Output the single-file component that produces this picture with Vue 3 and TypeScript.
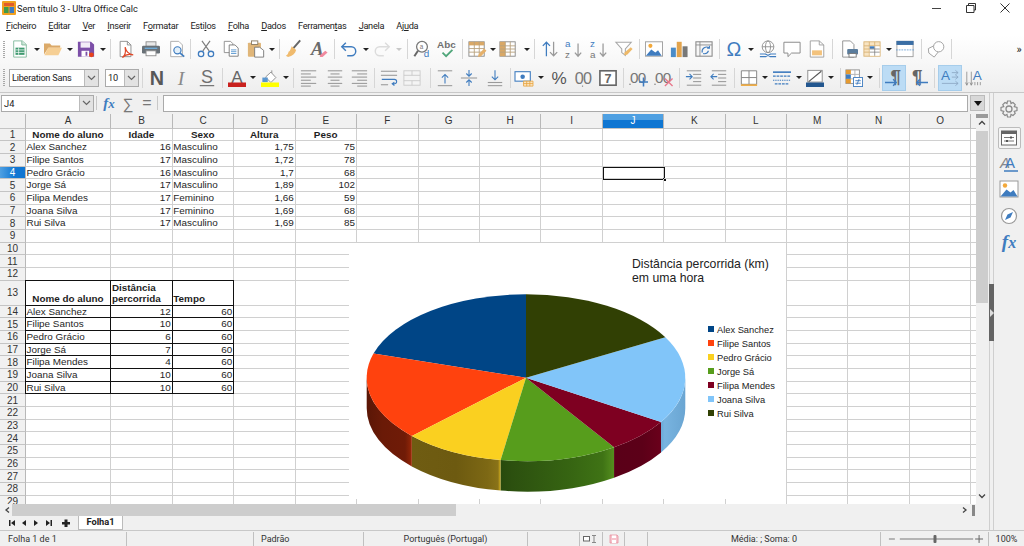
<script setup lang="ts">
const B = '#3f7cbf'
const S = `font-family="Liberation Sans"`
const lines = (ys: number[], x1: number[], x2: number[], c = '#8c8c8c') =>
  ys.map((y, i) => `<path d="M${x1[i]} ${y}H${x2[i]}" stroke="${c}" stroke-width="1.2" fill="none"/>`).join('')

const icons: Record<string, string> = {
  new: `<path d="M3 1h9.500L17 5v14H3z" fill="#fff" stroke="#7fb89a"/><path d="M12 1v4.500h5" fill="#cde6d8" stroke="#7fb89a"/><path d="M5 8.500h10v8H5z" fill="#3f9a70"/><path d="M5 11h10M5 13.800h10M8.500 8.500v8" stroke="#fff" stroke-width=".8"/>`,
  open: `<path d="M0 16V4h6.500l2 2H18v2.500H5L0 16z" fill="#dba968"/><path d="M.5 17 4.500 8.500h15.500L16 17z" fill="#f6cf94"/>`,
  save: `<path d="M1 2h14.500L19 5v13.500H1z" fill="#7c4fa8"/><rect x="4" y="2.500" width="10.500" height="6" fill="#f2ecf7"/><rect x="5" y="12" width="8.500" height="6.500" fill="#fff"/><rect x="9.500" y="13" width="2" height="4.500" fill="#7c4fa8"/><circle cx="16" cy="16.500" r="2.700" fill="#e8431c"/>`,
  pdf: `<path d="M3.500 1.500h8l4 4v13h-12z" fill="#fff" stroke="#8a8a8a"/><path d="M11.500 1.500v4h4" fill="none" stroke="#8a8a8a"/><path d="M9 8c1 4 4 8 9 8.500-5-1.500-9 0-12 3 3-2 4-6 3-11.500z" fill="none" stroke="#e0492a" stroke-width="1.300"/>`,
  print: `<rect x="4.500" y="2" width="11" height="5" fill="#e8e8e8" stroke="#8c8c8c"/><rect x="0" y="6.500" width="20" height="8.500" rx="1.500" fill="#697177"/><rect x="4.500" y="12" width="11" height="5.500" fill="#fff" stroke="#8c8c8c"/><rect x="3" y="8.500" width="14" height="1.400" fill="#6fb0e0"/>`,
  preview: `<path d="M3 1.500h9l4 4V18.500H3z" fill="#fff" stroke="#a8a8a8"/><circle cx="10.500" cy="11.500" r="4" fill="#e3f0fa" stroke="${B}" stroke-width="1.300"/><path d="M13.500 14.500l4.500 4" stroke="${B}" stroke-width="1.800"/>`,
  cut: `<path d="M6.500 12 14.500 1M13.500 12 5.500 1" stroke="#7d7d7d" stroke-width="1.300"/><circle cx="4.500" cy="15.500" r="3" stroke="${B}" stroke-width="1.400" fill="none"/><circle cx="15.500" cy="15.500" r="3" stroke="${B}" stroke-width="1.400" fill="none"/>`,
  copy: `<path d="M2.500 1.500h7L12 4v10H2.500z" fill="#fff" stroke="#8a8a8a"/><path d="M8 5.500h6.500L18 9v9H8z" fill="#fff" stroke="#777"/><path d="M10 11h6M10 13h6M10 15h6" stroke="#5a97d0"/>`,
  paste: `<rect x="1" y="3" width="14.500" height="15.500" fill="#e0b679" rx="1"/><rect x="5" y="1" width="7" height="4" fill="#fff" stroke="#8a7a60"/><path d="M8.500 8H14l4.500 3.500V19H8.500z" fill="#fff" stroke="#777"/>`,
  clone: `<path d="M18 .5 10.500 9" stroke="#666" stroke-width="2.200"/><path d="M8.500 7l5 4c-1 4-4 6.500-9 8L2 17.500c2-1 3-3 3-4.500 1.500 0 2.500-3 3.500-6z" fill="#f0bb6e"/>`,
  clear: `<text x="1" y="17" font-size="21" font-style="italic" font-weight="bold" font-family="Liberation Serif" fill="#6b6b6b">A</text><path d="M11 17l6-5 2.500 2-5.500 5h-3z" fill="#f0899e"/>`,
  undo: `<path d="M2 7.500h10.500a5 5 0 0 1 0 10H8" fill="none" stroke="${B}" stroke-width="1.600"/><path d="M6.500 3 2 7.500 6.500 12" fill="none" stroke="${B}" stroke-width="1.600"/>`,
  redo: `<path d="M18 7.500H7.500a5 5 0 0 0 0 10H12" fill="none" stroke="#dcdcdc" stroke-width="1.600"/><path d="M13.500 3 18 7.500 13.500 12" fill="none" stroke="#dcdcdc" stroke-width="1.600"/>`,
  find: `<circle cx="10" cy="7.500" r="6" fill="#fff" stroke="#777" stroke-width="1.400"/><path d="M5.500 12 1.500 18" stroke="#666" stroke-width="2.200"/><text x="12" y="19" font-size="11" ${S} fill="${B}">d</text><text x="7.500" y="10" font-size="7" ${S} fill="#777">a</text>`,
  spell: `<text x="-1" y="9" font-size="11" font-weight="bold" ${S} fill="#6f6f6f">Abc</text><path d="M5 14l4 4 7-7" fill="none" stroke="#4fa67a" stroke-width="2"/>`,
  table: `<rect x="1" y="2" width="17" height="16" fill="#fff" stroke="#888"/><path d="M1 2h17v4H1z" fill="#d9a866"/><path d="M1 9.500h17M1 13.500h17M7 2v16M12.500 2v16" stroke="#b9a27e"/><path d="M11 19l1-3.500 6-6 2.500 2.500-6 6z" fill="#e5b06a"/>`,
  rowcol: `<rect x="1" y="2" width="17" height="16" fill="#fff" stroke="#888"/><rect x="1" y="2" width="6" height="16" fill="#d9a866"/><path d="M1 6.500h17M1 10h17M1 13.500h17M7 2v16M12.500 2v16" stroke="#b9a27e"/>`,
  sort: `<path d="M6 18V2.500M2 6.500 6 2.500l4 4" fill="none" stroke="${B}" stroke-width="1.400"/><path d="M14 2V17.500M10 13.500 14 17.500l4-4" fill="none" stroke="#9a9a9a" stroke-width="1.400"/>`,
  az: `<text x="0" y="8" font-size="11" ${S} fill="${B}">a</text><text x="0" y="20.500" font-size="11" ${S} fill="#777">z</text><path d="M14.500 4v14M11 14l3.500 4 3.500-4" fill="none" stroke="#9a9a9a" stroke-width="1.400"/>`,
  za: `<text x="0" y="8" font-size="11" ${S} fill="${B}">z</text><text x="0" y="20.500" font-size="11" ${S} fill="#777">a</text><path d="M14.500 4v14M11 14l3.500 4 3.500-4" fill="none" stroke="#9a9a9a" stroke-width="1.400"/>`,
  filter: `<path d="M1 2.500h17l-6.500 7.500v7l-4-3v-4z" fill="#fff" stroke="#a8a8a8" stroke-width="1.200"/><path d="M10 17l1-3.500 6.500-5.500 2 2-6 6.500z" fill="#eeb968"/>`,
  image: `<rect x=".5" y="2" width="19" height="16" fill="#fff" stroke="#9c9c9c"/><circle cx="6" cy="6.500" r="2.300" fill="#f3a93b"/><path d="M1 17.500l6-7 4.500 3.500 3-2.500 4 6z" fill="${B}"/>`,
  chart: `<rect x="1" y="8.500" width="5.500" height="10.500" fill="#4a8cc9"/><rect x="7.500" y="2" width="5.500" height="17" fill="#e2a34c"/><rect x="14" y="7" width="5.500" height="12" fill="#787878"/>`,
  pivot: `<rect x="1" y="2" width="18" height="16" fill="#f7f7f7" stroke="#8c8c8c" stroke-width="1.200"/><path d="M1 5.500h18M5.500 2v16" stroke="#8c8c8c"/><path d="M8 14a5 5 0 0 1 8-5M16 6.500V9h-2.500M15 12a5 5 0 0 1-6 3" fill="none" stroke="${B}" stroke-width="1.200"/>`,
  omega: `<text x="10" y="17.500" text-anchor="middle" font-size="22" ${S} fill="${B}">Ω</text>`,
  link: `<circle cx="10" cy="7.500" r="6.500" fill="#fff" stroke="#8c8c8c"/><ellipse cx="10" cy="7.500" rx="2.800" ry="6.500" fill="none" stroke="#8c8c8c"/><path d="M3.500 7.500h13" stroke="#8c8c8c"/><path d="M1 15.500h7M12 15.500h7M1 18.500h7M12 18.500h7M7 15.500l6 3M13 15.500l-6 3" stroke="${B}" stroke-width="1.200"/>`,
  comment: `<path d="M1 2.500h18v12H9.500L5.500 18.500v-4H1z" fill="#fff" stroke="#8c8c8c" stroke-width="1.100"/>`,
  header: `<path d="M2.500 1h10l5 4.500V19h-15z" fill="#fff" stroke="#9c9c9c"/><path d="M12.500 1v4.500h5" fill="none" stroke="#9c9c9c"/><rect x="4.500" y="11.500" width="11" height="5.500" fill="#f3c27c"/>`,
  printarea: `<path d="M3 1h8.500l4 4v14H3z" fill="#fff" stroke="#8c8c8c"/><rect x="8" y="10" width="12" height="6" rx="1" fill="#5a7c9c"/><rect x="10" y="15" width="8" height="4" fill="#fff" stroke="#777"/>`,
  freeze: `<rect x="1" y="2" width="18" height="16" fill="#f8e4c2" stroke="#d9b376"/><path d="M1 6.500h18M1 10h18M1 13.500h18M7 2v16M13 2v16" stroke="#d9b376"/><rect x="7.500" y="7" width="11" height="10.500" fill="#fff"/><rect x="7.500" y="7" width="5" height="2.700" fill="#3f7cbf"/><path d="M7.500 10h11M7.500 13.500h11M13 7v10.500" stroke="#777" stroke-width=".8"/>`,
  split: `<rect x="1" y="1.500" width="18" height="17" fill="#fff" stroke="#9c9c9c"/><rect x=".5" y="1" width="19" height="4.500" fill="#3a6ea5"/><path d="M0 11h20" stroke="#6fa4d6" stroke-dasharray="2 1"/>`,
  shapes: `<path d="M1.500 9.500 8.500 6l5 6-5.500 7L2 14.500z" fill="#fff" stroke="#a4a4a4" stroke-width="1.100"/><circle cx="13" cy="7.500" r="5.700" fill="#fff" stroke="#a4a4a4" stroke-width="1.100"/>`,
  bold: `<text x="10" y="18" text-anchor="middle" font-size="22" font-weight="bold" ${S} fill="#585858">N</text>`,
  italic: `<text x="10" y="18" text-anchor="middle" font-size="22" font-style="italic" font-family="Liberation Serif" fill="#8a8a8a">I</text>`,
  under: `<text x="10" y="15.500" text-anchor="middle" font-size="20" ${S} fill="#6f6f6f">S</text><path d="M2 18.500h16" stroke="#6f6f6f" stroke-width="1.300"/>`,
  fcolor: `<text x="10" y="15" text-anchor="middle" font-size="19" ${S} fill="#666">A</text><rect x="0" y="15" width="20" height="5" fill="#c9211e"/>`,
  hcolor: `<path d="M5 9 11 3.500l5.500 6L11 15z" fill="#fff" stroke="#8a8a8a"/><path d="M1.500 9.500h6v5h-6z" fill="#5a97d0"/><path d="M12 1.500v3" stroke="#8a8a8a"/><rect x="0" y="15" width="20" height="5" fill="#ffff00"/>`,
  aleft: lines([2, 5.500, 9, 12.500, 16, 19], [1, 1, 1, 1, 1, 1], [18, 12, 18, 12, 18, 12], '#9a9a9a'),
  acenter: lines([2, 5.500, 9, 12.500, 16, 19], [2, 5, 2, 5, 2, 5], [18, 15, 18, 15, 18, 15], '#9a9a9a'),
  aright: lines([2, 5.500, 9, 12.500, 16, 19], [2, 8, 2, 8, 2, 8], [19, 19, 19, 19, 19, 19], '#9a9a9a'),
  wrap: lines([2.500, 7, 17.500], [1, 1, 1], [19, 19, 9], '#9a9a9a') + `<path d="M2 11.500h14a2.500 2.500 0 0 1 0 5h-2.500M16 14.500l-2.500 2 2.500 2" fill="none" stroke="${B}" stroke-width="1.200"/>`,
  merge: `<rect x="1" y="2" width="18" height="16" fill="#f4f4f4" stroke="#cacaca"/><path d="M1 7h18M1 13h18M10 2v5M10 13v5" stroke="#cacaca"/>`,
  vtop: lines([2, 18.500], [2, 2], [18, 18], '#9a9a9a') + `<path d="M10 16V6M6.500 9.500 10 6l3.500 3.500" fill="none" stroke="${B}" stroke-width="1.200"/>`,
  vmid: lines([10], [1], [19], '#9a9a9a') + `<path d="M10 1v6.500M7 5l3 3 3-3M10 19v-6.500M7 15l3-3 3 3" fill="none" stroke="${B}" stroke-width="1.200"/>`,
  vbot: lines([18.500, 15], [2, 2], [18, 18], '#9a9a9a') + `<path d="M10 1.500V12M6.500 8.500 10 12l3.500-3.500" fill="none" stroke="${B}" stroke-width="1.200"/>`,
  currency: `<rect x="0" y="3" width="17" height="10.500" fill="#fff" stroke="${B}" stroke-width="1.200"/><circle cx="8.500" cy="8.500" r="2.500" fill="${B}"/><path d="M9.500 13.500H20v5.500H9.500zM9.500 16.200H20M13 13.500v5.500M16.500 13.500v5.500" fill="#fbe6c4" stroke="#e8a33d" stroke-width=".9"/>`,
  percent: `<text x="10" y="17" text-anchor="middle" font-size="19" ${S} fill="#555">%</text>`,
  number: `<text x="10" y="16.500" text-anchor="middle" font-size="18" letter-spacing="-.8" ${S} fill="#777">00</text><circle cx="9.500" cy="19" r=".8" fill="#777"/>`,
  seven: `<rect x="1" y="2" width="18" height="16" fill="#fff" stroke="#666" stroke-width="1.800"/><text x="10" y="15.500" text-anchor="middle" font-size="14" font-weight="bold" ${S} fill="#666">7</text>`,
  addd: `<text x="8.500" y="15" text-anchor="middle" font-size="17" letter-spacing="-.8" ${S} fill="#777">00</text><circle cx="0" cy="17" r=".8" fill="#777"/><path d="M15 9.500V19.500M10 14.500h10" stroke="${B}" stroke-width="1.700"/>`,
  deld: `<text x="8.500" y="15" text-anchor="middle" font-size="17" letter-spacing="-.8" ${S} fill="#777">00</text><circle cx="0" cy="17" r=".8" fill="#777"/><path d="M11 10.500l8.500 8.500M19.500 10.500l-8.500 8.500" stroke="#e8788c" stroke-width="1.500"/>`,
  indent: lines([2, 6, 10, 14, 18], [2, 9, 9, 9, 2], [18, 18, 18, 18, 18], '#9a9a9a') + `<path d="M1 8.500h7M5 5.500l3 3-3 3" fill="none" stroke="${B}" stroke-width="1.200"/>`,
  outdent: lines([2, 6, 10, 14, 18], [2, 9, 9, 9, 2], [18, 18, 18, 18, 18], '#9a9a9a') + `<path d="M8 8.500H1M4 5.500l-3 3 3 3" fill="none" stroke="${B}" stroke-width="1.200"/>`,
  borders: `<path d="M1.500 2h17v15h-17zM10 2v15M1.500 9.500h17" fill="#fff" stroke="#888" stroke-width="1.100"/><rect x="1" y="17" width="18" height="1.800" fill="#eea83c"/>`,
  bstyle: `<path d="M0 3.500h20" stroke="${B}" stroke-width="1.800"/><path d="M0 8h20" stroke="${B}" stroke-width="1.300" stroke-dasharray="3 1"/><path d="M0 12.500h20" stroke="${B}" stroke-width="1.300" stroke-dasharray="1.500 1"/><path d="M2 16.500h16" stroke="${B}" stroke-width="1.300" stroke-dasharray="3 1"/>`,
  bcolor: `<rect x="2" y="1.500" width="16" height="13" fill="#fff" stroke="#888"/><path d="M3 14 17 2.500" stroke="#555" stroke-width="1.300"/><rect x="0" y="15" width="20" height="5" fill="#23578f"/>`,
  cond: `<rect x="1" y="1" width="15" height="15" fill="#fff" stroke="#8c8c8c"/><rect x="1" y="1" width="5.500" height="5" fill="#e59a30"/><rect x="1" y="6" width="5.500" height="5" fill="${B}"/><rect x="1" y="11" width="5.500" height="5" fill="#e59a30"/><path d="M6.500 6H16M6.500 11H16M11 1v15" stroke="#b0b0b0"/><rect x="9.500" y="9.500" width="10" height="10" fill="#fff" stroke="${B}"/><path d="M11.500 13h6M11.500 15.800h6M15.700 11l-2.500 6.500" stroke="${B}" fill="none"/>`,
  ltr: `<text x="12" y="16" text-anchor="middle" font-size="21" font-weight="bold" ${S} fill="#666">¶</text><path d="M0 15h12.500M9 11.500l3.500 3.500L9 18.500" fill="none" stroke="${B}" stroke-width="1.500"/>`,
  rtl: `<text x="8" y="16" text-anchor="middle" font-size="21" font-weight="bold" ${S} fill="#666">¶</text><path d="M20 15H7.500M11 11.500 7.500 15l3.500 3.500" fill="none" stroke="${B}" stroke-width="1.500"/>`,
  vtext: `<text x="0" y="12.500" font-size="15" ${S} fill="${B}">A</text><path d="M12 4h7M16 1.500 19 4l-3 2.500M12 9h7M16 6.500 19 9l-3 2.500M1 16h18M16 13.500l3 2.500-3 2.500" fill="none" stroke="#8ba6c2" stroke-width=".9"/>`,
  htext: `<text x="8.500" y="12.500" font-size="15" ${S} fill="${B}">A</text><path d="M2 3v15M.5 15 2 18l1.500-3M7 3v15M5.500 15 7 18l1.500-3M11 14.500V18M14 14.500V18M17 14.500V18" fill="none" stroke="#888" stroke-width=".9"/>`
}

type Item = { k: string; x: number }
const mk = (s: string, xs: number[]): Item[] => s.split(' ').map((k, i) => ({ k, x: xs[i] }))
const widths: Record<string, number> = { grip: 2, dd: 6, ddoff: 6, sep: 1, font: 90, size: 34, more: 10 }
function place(list: Item[]) {
  let end = 0
  return list.map((it) => {
    const w = widths[it.k] ?? (it.k === 'ltr' || it.k === 'vtext' ? 24 : 20)
    const m = it.x - w / 2 - end
    end = it.x + w / 2
    return { ...it, w, m }
  })
}
const row1 = place(mk(
  'grip new dd open dd save dd sep pdf print preview sep cut copy paste dd sep clone clear sep undo dd redo ddoff sep find spell sep table dd rowcol dd sep sort az za filter sep image chart pivot sep omega dd link comment header sep printarea freeze dd split sep shapes sep more',
  [3.5, 20, 37, 53, 70, 86, 103, 110, 126, 151, 176.5, 190.5, 206, 231, 256, 272, 279, 293, 319, 334, 349, 366, 382, 399, 407, 422, 447, 462, 477, 493, 508, 527, 534, 550, 574, 599, 624, 639, 654, 679, 704, 719, 734, 751, 768, 792, 817, 832, 849, 872, 889, 905, 921, 936, 951, 1019]
))
const row2 = place(mk(
  'grip font size sep bold italic under sep fcolor dd hcolor dd sep aleft acenter aright sep wrap merge sep vtop vmid vbot sep currency dd percent number seven sep addd deld sep indent outdent sep borders dd bstyle dd bcolor dd sep cond dd sep ltr rtl sep vtext htext',
  [3.5, 54, 122, 142, 157, 181, 207, 222, 237, 253, 270, 286, 293, 309, 335, 359, 374, 389, 412, 430, 445, 469, 495, 510, 524, 541, 559, 583, 608, 623, 639, 664, 679, 694, 719, 734, 749, 765, 782, 799, 815, 831, 840, 854, 870, 879, 894, 919, 934, 950, 974]
))
const menus = [
  ['', 'F', 'icheiro'], ['', 'E', 'ditar'], ['', 'V', 'er'], ['', 'I', 'nserir'], ['F', 'o', 'rmatar'],
  ['Esti', 'l', 'os'], ['', 'F', 'olha'], ['', 'D', 'ados'], ['Ferramen', 't', 'as'], ['', 'J', 'anela'], ['Aj', 'u', 'da']
]

const letters = 'ABCDEFGHIJKLMNOP'.split('')
const t1: string[][] = [
  ['Alex Sanchez', '16', 'Masculino', '1,75', '75'],
  ['Filipe Santos', '17', 'Masculino', '1,72', '78'],
  ['Pedro Grácio', '16', 'Masculino', '1,7', '68'],
  ['Jorge Sá', '17', 'Masculino', '1,89', '102'],
  ['Filipa Mendes', '17', 'Feminino', '1,66', '59'],
  ['Joana Silva', '17', 'Feminino', '1,69', '68'],
  ['Rui Silva', '17', 'Masculino', '1,69', '85']
]
const distances = [12, 10, 6, 7, 4, 10, 10]
type Cell = { t: string; c: string }
function cellAt(r: number, c: number): Cell {
  if (r === 1) {
    const h = ['Nome do aluno', 'Idade', 'Sexo', 'Altura', 'Peso'][c]
    if (h) return { t: h, c: 'b ctr' }
  }
  if (r >= 2 && r <= 8 && c < 5) {
    return { t: t1[r - 2][c], c: c === 0 || c === 2 ? '' : 'rgt' }
  }
  if (r === 13 && c < 3) {
    const t = ['Nome do aluno', 'Distância percorrida', 'Tempo'][c]
    return { t, c: `b bx bxt ${c === 0 ? 'ctr bxl low' : 'low wrap'}` }
  }
  if (r >= 14 && r <= 20 && c < 3) {
    const i = r - 14
    const t = [t1[i][0], String(distances[i]), '60'][c]
    return { t, c: `bx ${c === 0 ? 'bxl' : 'rgt'}` }
  }
  return { t: '', c: '' }
}
const rows = Array.from({ length: 29 }, (_, i) => i + 1)
const gridCells = rows.map((r) => ({ r, cells: letters.map((_, c) => cellAt(r, c)) }))

/* chart */
const cx = 526
const cy = 377.7
const rx = 159.3
const ry = 83.4
const depth = 30.5
const total = distances.reduce((a, b) => a + b, 0)
const pt = (deg: number) => {
  const a = (deg * Math.PI) / 180
  return [cx - rx * Math.sin(a), cy - ry * Math.cos(a)]
}
const names = t1.map((x) => x[0])
const colors = ['#004586', '#ff420e', '#fad020', '#579d1c', '#7e0021', '#81c5f9', '#314004']
const sideStops: string[][] = [
  [],
  ['0:#5a1606', '.35:#6a1a07', '.85:#701b07', '.96:#8c2408', '1:#a82c0a'],
  ['0:#6f5c12', '.5:#6d5a10', '.85:#7d6814', '.97:#8a7318', '1:#d9b31e'],
  ['0:#274a0d', '.1:#2c500f', '.6:#366412', '.9:#3f7315', '1:#558f1e'],
  ['0:#5a0018', '.6:#5c0018', '1:#6a001b'],
  ['0:#6aa9d8', '.15:#78b4e0', '1:#6aa5d2']
]
let acc = 0
const slices = distances.map((d, i) => {
  const a = (acc / total) * 360
  acc += d
  const b = (acc / total) * 360
  const [x1, y1] = pt(a)
  const [x2, y2] = pt(b)
  const top = `M${cx} ${cy}L${x1} ${y1}A${rx} ${ry} 0 ${b - a > 180 ? 1 : 0} 0 ${x2} ${y2}Z`
  const sa = Math.max(a, 90)
  const sb = Math.min(b, 270)
  let side = ''
  if (sb > sa) {
    const [p1, q1] = pt(sa)
    const [p2, q2] = pt(sb)
    side = `M${p1} ${q1}A${rx} ${ry} 0 0 0 ${p2} ${q2}L${p2} ${q2 + depth}A${rx} ${ry} 0 0 1 ${p1} ${q1 + depth}Z`
  }
  const stops = (sideStops[i] ?? []).map((s) => {
    const [o, c] = s.split(':')
    return { o, c }
  })
  return { id: `side${i}`, top, side, color: colors[i], stops }
})
const legend = names.map((n, i) => ({ n, color: colors[i], y: 329 + i * 14 }))
</script>

<template>
  <div class="app">
    <header class="title">
      <svg class="logo" width="14" height="14" viewBox="0 0 14 14">
        <rect width="14" height="14" rx="1" fill="#f0a020" />
        <rect x="2" y="2" width="10" height="3" fill="#e25b2a" />
        <rect x="2" y="6" width="4.500" height="6" fill="#3f9a4a" />
        <rect x="7.500" y="6" width="4.500" height="6" fill="#3f7cbf" />
      </svg>
      <span>Sem título 3 - Ultra Office Calc</span>
      <div class="winctl">
        <svg width="12" height="12" viewBox="0 0 12 12"><path d="M1 6.500h9" stroke="#444" fill="none" /></svg>
        <svg width="12" height="12" viewBox="0 0 12 12"><path d="M3.500 3V1.500h7V8H9M1.500 3.500h7.500V10.500H1.500z" stroke="#333" fill="none" /></svg>
        <svg width="12" height="12" viewBox="0 0 12 12"><path d="M1.500 1.500l9 9M10.500 1.500l-9 9" stroke="#333" fill="none" /></svg>
      </div>
    </header>

    <nav class="menu">
      <span v-for="m in menus" :key="m.join('')">{{ m[0] }}<u>{{ m[1] }}</u>{{ m[2] }}</span>
    </nav>

    <div class="bars">
      <div v-for="(row, ri) in [row1, row2]" :key="ri" class="tb">
        <template v-for="(it, i) in row" :key="i">
          <i v-if="it.k === 'grip'" class="grip" :style="{ marginLeft: it.m + 'px' }"></i>
          <i v-else-if="it.k === 'dd' || it.k === 'ddoff'" class="dd" :class="{ off: it.k === 'ddoff' }" :style="{ marginLeft: it.m + 'px' }"></i>
          <i v-else-if="it.k === 'sep'" class="sep" :style="{ marginLeft: it.m + 'px' }"></i>
          <span v-else-if="it.k === 'more'" class="more" :style="{ marginLeft: it.m + 'px' }">»</span>
          <div v-else-if="it.k === 'font'" class="combo fontbox" :style="{ marginLeft: it.m + 'px' }">
            <span>Liberation Sans</span><b class="cbtn"><svg width="9" height="6" viewBox="0 0 9 6"><path d="M1 1l3.500 3.500L8 1" fill="none" stroke="#666" stroke-width="1.200" /></svg></b>
          </div>
          <div v-else-if="it.k === 'size'" class="combo sizebox" :style="{ marginLeft: it.m + 'px' }">
            <span>10</span><b class="cbtn"><svg width="9" height="6" viewBox="0 0 9 6"><path d="M1 1l3.500 3.500L8 1" fill="none" stroke="#666" stroke-width="1.200" /></svg></b>
          </div>
          <div v-else class="icwrap" :class="{ active: it.k === 'ltr' || it.k === 'vtext' }" :style="{ marginLeft: it.m + 'px', width: it.w + 'px' }">
            <svg width="18" height="18" viewBox="0 0 20 20" v-html="icons[it.k]"></svg>
          </div>
        </template>
      </div>
    </div>

    <div class="body">
      <div class="left">
        <div class="fbar">
          <div class="namebox">
            <span>J4</span><b class="cbtn"><svg width="9" height="6" viewBox="0 0 9 6"><path d="M1 1l3.500 3.500L8 1" fill="none" stroke="#666" stroke-width="1.200" /></svg></b>
          </div>
          <i class="fsep"></i>
          <span class="fx">f<em>x</em></span>
          <span class="sigma">∑</span>
          <span class="eq">=</span>
          <i class="fsep two"></i>
          <div class="finput"></div>
          <div class="fdrop"><i></i></div>
        </div>

        <div class="sheetrow">
          <div class="sheet">
            <div class="grid">
              <div class="corner"></div>
              <div v-for="l in letters" :key="l" class="colh" :class="{ sel: l === 'J' }">{{ l === 'P' ? '' : l }}</div>
              <template v-for="row in gridCells" :key="row.r">
                <div class="rowh" :class="{ sel: row.r === 4 }">{{ row.r }}</div>
                <div v-for="(cell, ci) in row.cells" :key="ci" class="cell" :class="cell.c">
                  <span>{{ cell.t }}</span>
                  <i v-if="row.r === 4 && ci === 9" class="cursor"></i>
                </div>
              </template>
            </div>

            <svg class="chart" viewBox="349 243 437 256" width="437" height="256">
              <rect x="349" y="243" width="437" height="256" fill="#fff" />
              <defs>
                <linearGradient v-for="s in slices" :id="s.id" :key="s.id" x1="0" y1="0" x2="1" y2="0">
                  <stop v-for="st in s.stops" :key="st.o" :offset="st.o" :stop-color="st.c" />
                </linearGradient>
              </defs>
              <template v-for="s in slices" :key="s.id">
                <path v-if="s.side" :d="s.side" :fill="`url(#${s.id})`" />
              </template>
              <path v-for="s in slices" :key="s.id + 't'" :d="s.top" :fill="s.color" />
              <text class="ct" x="632" y="268">Distância percorrida (km)</text>
              <text class="ct" x="632" y="282">em uma hora</text>
              <template v-for="e in legend" :key="e.n">
                <rect :x="708" :y="e.y - 3" width="6" height="6" :fill="e.color" />
                <text class="lg" x="717" :y="e.y + 3.500">{{ e.n }}</text>
              </template>
            </svg>
          </div>
          <div class="vscroll">
            <i class="vhandle"></i>
            <svg class="arr" width="12" height="10" viewBox="0 0 12 10"><path d="M3 6.500 6 3.500l3 3" fill="none" stroke="#444" stroke-width="1.300" /></svg>
            <i class="vthumb"></i>
            <i class="vfill"></i>
            <svg class="arr" width="12" height="10" viewBox="0 0 12 10"><path d="M3 3.500 6 6.500l3-3" fill="none" stroke="#444" stroke-width="1.300" /></svg>
          </div>
        </div>

        <div class="hscroll">
          <svg width="10" height="12" viewBox="0 0 10 12"><path d="M7 3.500 4 6l3 2.500" fill="none" stroke="#444" stroke-width="1.300" /></svg>
          <i class="hthumb"></i>
          <i class="hfill"></i>
          <svg width="10" height="12" viewBox="0 0 10 12"><path d="M3 3.500 6 6 3 8.500" fill="none" stroke="#444" stroke-width="1.300" /></svg>
          <i class="hhandle"></i>
        </div>

        <div class="tabs">
          <svg class="tabnav" width="72" height="14" viewBox="0 0 72 14">
            <path d="M9 4h1.500v6H9zM15 4v6l-4-3z" fill="#222" />
            <path d="M26 4v6l-4-3z" fill="#222" />
            <path d="M34 4v6l4-3z" fill="#222" />
            <path d="M46 4v6l4-3zM50.500 4H52v6h-1.500z" fill="#222" />
            <path d="M64.500 3.500h3V6H70v2.500h-2.500V11h-3V8.500H62V6h2.500z" fill="#222" />
          </svg>
          <div class="tab">Folha1</div>
        </div>
      </div>

      <div class="splitter"><i class="grab"><b></b></i></div>

      <aside class="side">
        <svg width="20" height="20" viewBox="0 0 20 20" class="sg"><circle cx="10" cy="10" r="3" fill="none" stroke="#8a8a8a" stroke-width="1.300" /><path d="M8.500 2h3l.5 2.500 2-1 2.200 2.200-1 2 2.800.8v3l-2.800.8 1 2-2.200 2.200-2-1-.5 2.500h-3l-.5-2.500-2 1-2.200-2.200 1-2L2 11.500v-3l2.800-.8-1-2L6 3.500l2 1z" fill="none" stroke="#8a8a8a" stroke-width="1.200" /></svg>
        <div class="deck">
          <svg width="16" height="16" viewBox="0 0 16 16"><rect x=".5" y="1" width="15" height="14" fill="#fff" stroke="#666" /><rect x=".5" y="1" width="15" height="3" fill="#666" /><path d="M3 7.500h10M3 11h10" stroke="#777" /><rect x="9" y="6.500" width="2" height="2" fill="#555" /><rect x="5" y="10" width="2" height="2" fill="#555" /></svg>
        </div>
        <svg class="sa" width="20" height="20" viewBox="0 0 20 20"><text x="1" y="15" font-size="15" font-style="italic" font-family="Liberation Sans" fill="#888">A</text><text x="6" y="15" font-size="15" font-family="Liberation Sans" fill="#3f7cbf">A</text><path d="M5 18h14" stroke="#3f7cbf" stroke-width="1.500" /></svg>
        <svg class="sb" width="20" height="18" viewBox="0 0 20 18"><rect x="1" y="1" width="18" height="16" fill="#fff" stroke="#999" /><circle cx="6" cy="5.500" r="2.200" fill="#f3a93b" /><path d="M1.500 16.500l6-7 4 3 3-2.500 4 6.500z" fill="#3f7cbf" /></svg>
        <svg class="sc" width="18" height="18" viewBox="0 0 18 18"><circle cx="9" cy="9" r="7.500" fill="#fff" stroke="#999" stroke-width="1.200" /><path d="M13 5 10.500 10.500 5 13l2.500-5.500z" fill="#3f7cbf" /></svg>
        <span class="sfx">f<em>x</em></span>
      </aside>
    </div>

    <footer class="status">
      <div class="st w1 pad">Folha 1 de 1</div>
      <div class="st w2"></div>
      <div class="st w3 pad2">Padrão</div>
      <div class="st w4 ctr">Português (Portugal)</div>
      <div class="st w5"></div>
      <div class="st w6 ctr"><svg width="18" height="12" viewBox="0 0 18 12"><rect x="1.500" y="3.500" width="6" height="4.500" fill="#fff" stroke="#666" /><path d="M10 2.500h4M12 2.500v7M10 9.500h4" stroke="#888" fill="none" /></svg></div>
      <div class="st w7 ctr"><svg width="10" height="10" viewBox="0 0 10 10"><path d="M1 1h7l1 1v7H1z" fill="#f6c3cc" stroke="#e9909f" stroke-width=".8" /><rect x="3" y="1.500" width="4" height="2.500" fill="#fff" /><rect x="3" y="6" width="4" height="3" fill="#fff" /></svg></div>
      <div class="st w8"></div>
      <div class="st w9 ctr">Média: ; Soma: 0</div>
      <div class="st w10 zoom">
        <svg width="108" height="14" viewBox="0 0 108 14"><path d="M8 7h6M19 7h74" stroke="#777" fill="none" /><rect x="53" y="3" width="3" height="8" rx="1" fill="#666" /><path d="M95 7h8M99 3v8" stroke="#666" fill="none" /></svg>
      </div>
      <div class="st w11 ctr">100%</div>
    </footer>
  </div>
</template>

<style>
html, body { margin: 0; padding: 0; background: #fff; }
</style>

<style scoped>
.app { width: 1024px; height: 546px; overflow: hidden; display: flex; flex-direction: column; font-family: Roboto, "Noto Sans", sans-serif; color: #222; background: #fff; }
.title { height: 17px; display: flex; align-items: center; font-size: 9.2px; letter-spacing: -0.05px; flex: none; padding: 0 0 1px 2px; box-sizing: border-box; }
.logo { margin-right: 1px; }
.winctl { margin-left: auto; display: flex; gap: 22px; padding-right: 13px; }
.menu { height: 18px; flex: none; display: flex; align-items: center; gap: 12.2px; padding: 0 0 1px 6px; box-sizing: border-box; font-size: 9.2px; letter-spacing: -0.3px; }
.menu u { text-underline-offset: 1px; }
.bars { height: 57px; flex: none; background: linear-gradient(#fff, #f7f7f7 50%, #eeeeee); border-bottom: 1px solid #c8c8c8; box-sizing: content-box; }
.tb { height: 28.5px; display: flex; align-items: center; overflow: hidden; }
.grip { width: 2px; height: 17px; flex: none; background: repeating-linear-gradient(#a8a8a8 0 1px, transparent 1px 2px); }
.dd { height: 0; flex: none; box-sizing: content-box; width: 0; border-left: 3px solid transparent; border-right: 3px solid transparent; border-top: 3px solid #222; }
.dd.off { border-top-color: #c8c8c8; }
.sep { width: 1px; height: 20px; flex: none; background: #d6d6d6; }
.more { width: 10px; flex: none; font-size: 11px; line-height: 11px; text-align: center; }
.icwrap { flex: none; height: 26px; display: flex; align-items: center; justify-content: center; box-sizing: border-box; }
.icwrap svg { overflow: visible; flex: none; }
.icwrap.active { background: #bcdcf5; border: 1px solid #a6cdeb; }
.combo { flex: none; height: 18px; box-sizing: border-box; background: #fff; border: 1px solid #aaa; display: flex; align-items: stretch; font-size: 9.2px; letter-spacing: -0.25px; }
.combo span { flex: 1; padding-left: 2px; line-height: 16px; }
.fontbox { width: 90px; }
.sizebox { width: 34px; }
.cbtn { width: 13px; flex: none; background: #e2e2e2; border-left: 1px solid #bbb; display: flex; align-items: center; justify-content: center; }

.body { flex: 1; min-height: 0; display: flex; }
.left { width: 989px; flex: none; display: flex; flex-direction: column; }
.fbar { height: 21px; flex: none; display: flex; align-items: center; background: #f0f0f0; padding: 0 0 1px 1px; box-sizing: border-box; }
.namebox { width: 93px; height: 17px; box-sizing: border-box; background: #fff; border: 1px solid #aaa; display: flex; font-size: 9.3px; flex: none; }
.namebox span { flex: 1; padding-left: 2px; line-height: 15px; }
.fsep { width: 1px; height: 14px; background: #c8c8c8; margin-left: 2px; flex: none; }
.fsep.two { margin-left: 1px; margin-right: 5px; }
.fx { width: 18px; margin-left: 3px; color: #3f7cbf; font: italic bold 15px "Liberation Serif", serif; text-align: center; flex: none; }
.fx em { font-size: 13px; font-style: italic; }
.sigma { width: 18px; margin-left: 1px; font: 15px "Liberation Sans", sans-serif; color: #777; text-align: center; flex: none; }
.eq { width: 18px; margin-left: 1px; font: 16px "Liberation Sans", sans-serif; color: #777; text-align: center; flex: none; }
.finput { width: 805px; height: 17px; box-sizing: border-box; background: #fff; border: 1px solid #aaa; flex: none; }
.fdrop { width: 15px; height: 16px; margin-left: 2px; background: #d8d8d8; border: 1px solid #bbb; box-sizing: border-box; display: flex; align-items: center; justify-content: center; flex: none; }
.fdrop i { border-left: 4.5px solid transparent; border-right: 4.5px solid transparent; border-top: 5px solid #111; }

.sheetrow { height: 390px; flex: none; display: flex; }
.sheet { width: 976px; flex: none; position: relative; overflow: hidden; background: #fff; }
.grid { display: grid; grid-template-columns: 26px 85.4px repeat(14, 61.43px) 40px; grid-template-rows: 14.5px repeat(12, 12.7px) 24.8px repeat(16, 12.68px); font: 9.9px "Liberation Sans", sans-serif; color: #1e1e1e; }
.corner, .colh, .rowh { background: #f1f1f1; box-sizing: border-box; border-right: 1px solid #b8b8b8; border-bottom: 1px solid #c4c4c4; display: flex; align-items: center; justify-content: center; font-size: 10px; color: #333; overflow: hidden; }
.colh.sel { background: linear-gradient(#4fa0e2 0 45%, #0f76d2 45%); color: #fff; }
.rowh.sel { background: linear-gradient(90deg, #4fa0e2, #0f76d2 60%); color: #fff; }
.cell { box-sizing: border-box; border-right: 1px solid #d0d0d0; border-bottom: 1px solid #d0d0d0; padding: 0 1px 0 0.5px; white-space: nowrap; line-height: 11.7px; position: relative; min-width: 0; }
.cell.b { font-weight: 700; }
.cell.ctr { text-align: center; }
.cell.rgt { text-align: right; }
.cell.bx { border-right-color: #111; border-bottom-color: #111; }
.cell.bxl { box-shadow: -1px 0 0 #111; }
.cell.bxt { box-shadow: 0 -1px 0 #111; }
.cell.bxl.bxt { box-shadow: -1px 0 0 #111, 0 -1px 0 #111, -1px -1px 0 #111; }
.cell.low { display: flex; align-items: flex-end; line-height: 11.5px; }
.cell.low.ctr { justify-content: center; }
.cell.wrap { white-space: normal; }
.cursor { position: absolute; left: 0; top: 0; width: 62px; height: 13px; box-sizing: border-box; border: 1.6px solid #111; }
.cursor::after { content: ""; position: absolute; right: -2.5px; bottom: -2.5px; width: 3.5px; height: 3.5px; background: #111; }
.chart { position: absolute; left: 349px; top: 129px; display: block; }
.ct { font: 12.25px "Liberation Sans", sans-serif; fill: #222; }
.lg { font: 9.3px "Liberation Sans", sans-serif; fill: #222; }

.vscroll { width: 13px; flex: none; background: #f0f0f0; display: flex; flex-direction: column; align-items: center; box-sizing: border-box; padding-right: 1px; }
.vhandle { width: 12px; height: 4px; flex: none; background: #9a9a9a; }
.arr { flex: none; margin: 0 0 3px; }
.vthumb { width: 12px; height: 172px; flex: none; background: #cdcdcd; }
.vfill { flex: 1; }
.hscroll { height: 12px; flex: none; display: flex; align-items: center; background: #f0f0f0; padding-left: 2px; }
.hthumb { width: 444px; height: 12px; background: #cdcdcd; flex: none; }
.hfill { flex: 1; }
.hhandle { width: 3px; height: 11px; background: #888; margin: 0 14px 0 2px; flex: none; }
.tabs { height: 14px; flex: none; display: flex; background: #f0f0f0; }
.tabnav { flex: none; margin-right: 6px; }
.tab { width: 45px; height: 14px; box-sizing: border-box; background: #fff; border: 1px solid #bbb; border-top: 0; font: 700 9.3px Roboto, sans-serif; text-align: center; line-height: 12px; color: #222; }

.splitter { width: 4px; flex: none; background: #f0f0f0; border-left: 1px solid #cfcfcf; box-sizing: border-box; position: relative; }
.grab { position: absolute; left: -1px; top: 191px; width: 5px; height: 57px; background: #646464; display: flex; align-items: center; justify-content: center; }
.grab b { border-top: 4px solid transparent; border-bottom: 4px solid transparent; border-left: 4px solid #ddd; }
.side { flex: 1; background: #f0f0f0; border-left: 1px solid #cfcfcf; display: flex; flex-direction: column; align-items: center; }
.sg { margin-top: 6px; }
.deck { width: 23px; height: 22px; margin-top: 8px; box-sizing: border-box; border: 1px solid #bcbcbc; border-radius: 2px; background: #f5f5f5; display: flex; align-items: center; justify-content: center; }
.sa { margin-top: 4px; }
.sb { margin-top: 7px; }
.sc { margin-top: 9px; }
.sfx { margin-top: 6px; color: #3f7cbf; font: italic bold 19px "Liberation Serif", serif; }
.sfx em { font-size: 16px; }

.status { height: 16px; flex: none; display: flex; background: #f0f0f0; border-top: 1px solid #c8c8c8; box-sizing: border-box; font-size: 9px; color: #333; }
.st { box-sizing: border-box; border-right: 1px solid #c0c0c0; height: 14px; margin-top: 0.500px; display: flex; align-items: center; flex: none; white-space: nowrap; }
.pad { padding-left: 8px; }
.pad2 { padding-left: 7px; }
.st.ctr { justify-content: center; }
.w1, .w2 { width: 127px; }
.w3 { width: 110px; }
.w4 { width: 164px; }
.w5 { width: 52px; }
.w6 { width: 23px; }
.w7 { width: 22px; }
.w8 { width: 23px; }
.w9 { width: 233px; }
.w10 { width: 108px; }
.w11 { flex: 1; border-right: 0; }
</style>
